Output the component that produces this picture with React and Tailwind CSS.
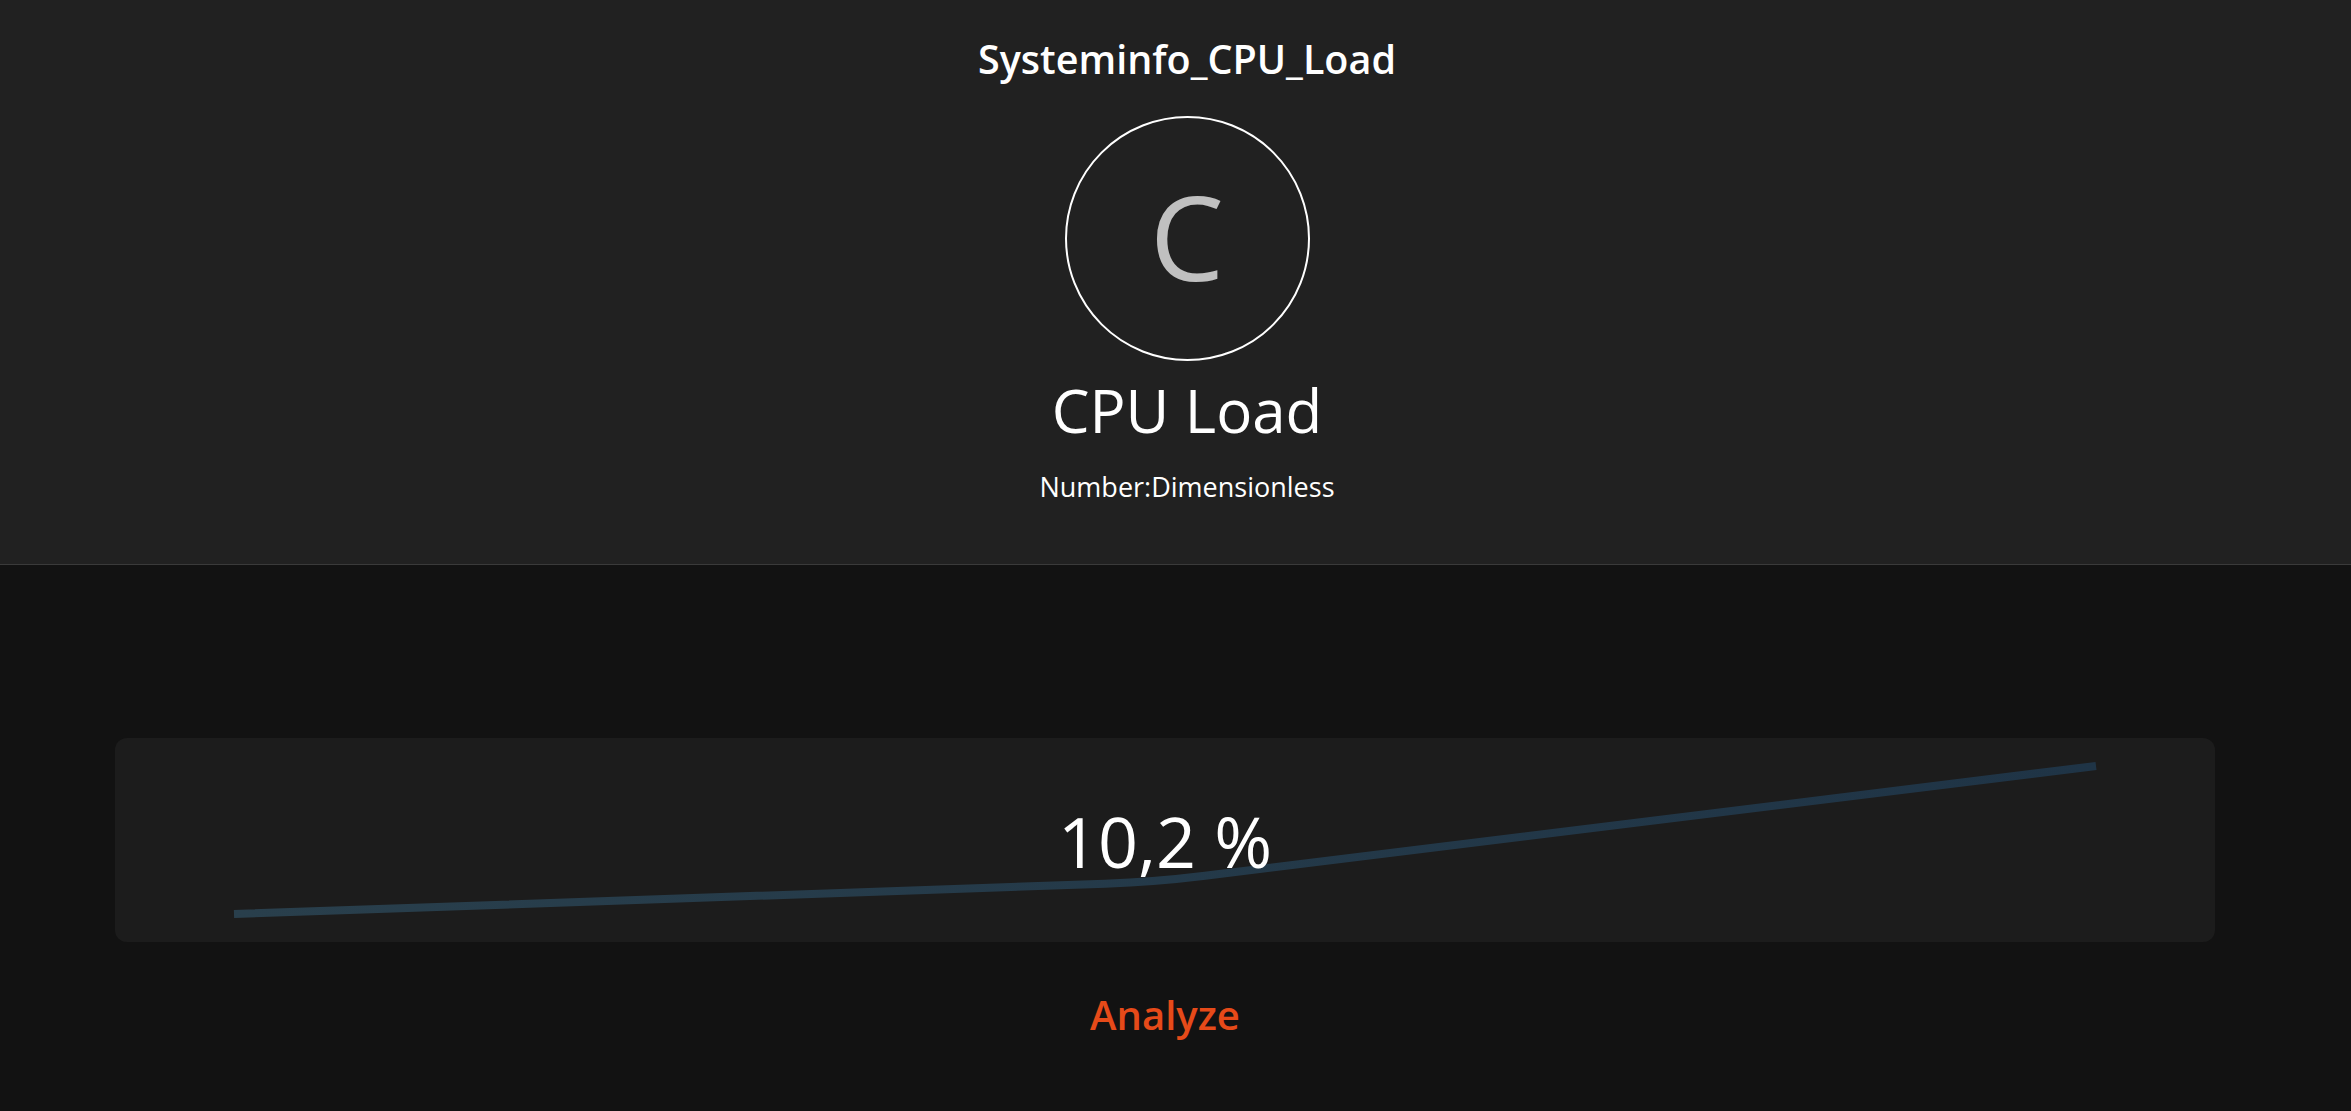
import React from 'react';

const Sparkline = () => (
    <svg className="absolute inset-0 w-full h-full" viewBox="0 0 2100 204" preserveAspectRatio="none">
        <defs>
            <linearGradient id="spark" x1="0" y1="0" x2="1" y2="0">
                <stop offset="0%" stopColor="#293f4c" />
                <stop offset="100%" stopColor="#1f3446" />
            </linearGradient>
        </defs>
        <path
            d="M119 176 L990 145.7 Q1040 144 1090 137.8 L1981 28"
            fill="none"
            stroke="url(#spark)"
            strokeWidth="8"
            strokeLinejoin="round"
        />
    </svg>
);

export default function App() {
    return (
        <div className="min-h-screen w-full bg-[#121212] font-['Open_Sans',sans-serif] text-white">
            {/* Header */}
            <div className="h-[565px] bg-[#212121] border-b border-[#3a3a3a] flex flex-col items-center pl-[23px]">
                <div className="pt-[40px] text-[39.5px] leading-none font-semibold">Systeminfo_CPU_Load</div>
                <div className="mt-[36px] w-[245px] h-[245px] rounded-full border-2 border-white flex items-center justify-center">
                    <span className="text-[118px] leading-none font-normal text-[#c0c0c0] -mt-[4px]">C</span>
                </div>
                <div className="mt-[19px] text-[60px] leading-none font-normal">CPU Load</div>
                <div className="mt-[33px] text-[27px] leading-none font-normal">Number:Dimensionless</div>
            </div>

            {/* Value card */}
            <div className="pl-[115px] pr-[136px] pt-[173px]">
                <div className="relative h-[204px] rounded-[12px] bg-[#1c1c1c] overflow-hidden">
                    <Sparkline />
                    <div className="relative pt-[68px] text-center text-[70px] leading-none font-normal">10,2 %</div>
                </div>
                <div className="mt-[53px] text-center text-[40px] leading-none font-semibold text-[#e64a19]">Analyze</div>
            </div>
        </div>
    );
}
